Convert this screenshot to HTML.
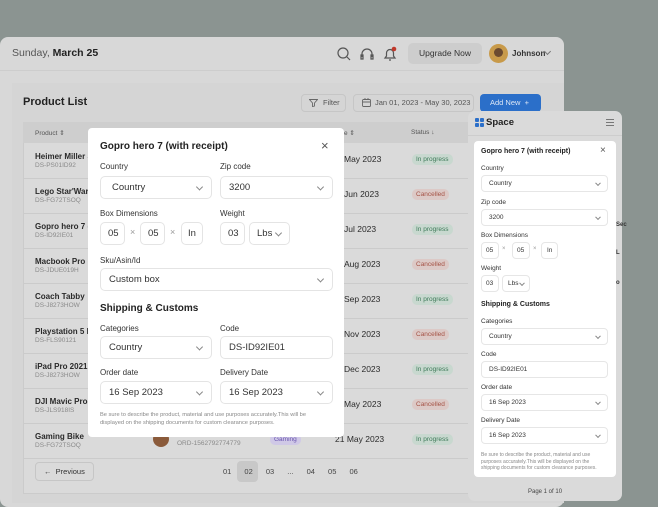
<!DOCTYPE html>
<html><head><meta charset="utf-8"><style>
*{box-sizing:border-box;margin:0;padding:0}
body{width:658px;height:494px;overflow:hidden;background:#8b9491;font-family:"Liberation Sans",sans-serif;position:relative;color:#2a2a2a}
.a{position:absolute;white-space:nowrap}
.win{left:0;top:37px;width:564px;height:470px;background:#d8d8d8;border-radius:8px}
.t{font-size:8px;color:#2a2a2a}
.sm{font-size:6.5px;color:#8a8a8a}
.bx{position:absolute;border:1px solid #e4e4e4;border-radius:5px;background:#fff;font-size:9.5px;color:#333;padding-left:11px;display:flex;align-items:center}
.chev{position:absolute;right:9px;top:50%;width:5px;height:5px;border-right:1px solid #888;border-bottom:1px solid #888;transform:translateY(-70%) rotate(45deg)}
.lb{position:absolute;font-size:8px;color:#333}
.badge{position:absolute;font-size:6.5px;padding:2px 4px;border-radius:5px}
.g{background:#c8d8cf;color:#3d7a58}
.r{background:#dcc9c6;color:#a55245}
.mb{position:absolute;border:1px solid #e6e6e6;border-radius:4px;background:#fff;font-size:6.5px;color:#333;padding-left:7px;display:flex;align-items:center}
.mb .chev{right:7px;width:4px;height:4px}
.ml{position:absolute;font-size:6.5px;color:#333}
</style></head><body>
<div class="a win"></div>
<div class="a" style="left:0;top:70px;width:564px;height:1px;background:#cdcdcd"></div>
<div class="a" style="left:12px;top:47px;font-size:10.5px;color:#555">Sunday, <b style="color:#222">March 25</b></div>
<svg class="a" style="left:336px;top:46px" width="64" height="16" fill="none" stroke="#555" stroke-width="1.2"><circle cx="7" cy="7" r="5"/><path d="M11 11l3 3"/><path d="M26 11v-3a5 5 0 0110 0v3M25 9h2v4h-2zM35 9h2v4h-2z"/><path d="M49 12h10l-1.5-2v-3a3.5 3.5 0 00-7 0v3zM53 14h2"/><circle cx="58" cy="3" r="2.3" fill="#c0392b" stroke="none"/></svg>
<div class="a" style="left:408px;top:43px;width:74px;height:21px;background:#cdcdcd;border-radius:5px;font-size:8.5px;color:#333;text-align:center;line-height:21px">Upgrade Now</div>
<div class="a" style="left:489px;top:44px;width:19px;height:19px;border-radius:50%;background:#c89a4a"><div style="margin:4px 5px;width:9px;height:9px;border-radius:50%;background:#6b4a30"></div></div>
<div class="a" style="left:512px;top:49px;font-size:8px;font-weight:bold;color:#333">Johnson</div>
<div class="a" style="left:545px;top:49px;width:5px;height:5px;border-right:1px solid #777;border-bottom:1px solid #777;transform:rotate(45deg)"></div>
<div class="a" style="left:12px;top:83px;width:552px;height:420px;background:#d5d5d5"></div>
<div class="a" style="left:23px;top:96px;font-size:11px;font-weight:bold;color:#222">Product List</div>
<div class="a" style="left:301px;top:94px;width:45px;height:18px;border:1px solid #c6c6c6;border-radius:4px;font-size:7.5px;color:#555;line-height:16px;padding-left:21px">Filter</div>
<svg class="a" style="left:309px;top:99px" width="9" height="8" fill="none" stroke="#666" stroke-width="0.9"><path d="M0.5 0.5h8l-3 3.5v3l-2 0.5v-3.5z"/></svg>
<div class="a" style="left:353px;top:94px;width:121px;height:18px;border:1px solid #c6c6c6;border-radius:4px;font-size:7.5px;color:#555;line-height:16px;padding-left:21px">Jan 01, 2023 - May 30, 2023</div>
<svg class="a" style="left:362px;top:98px" width="9" height="9" fill="none" stroke="#666" stroke-width="0.9"><rect x="0.5" y="1.5" width="8" height="7" rx="1"/><path d="M0.5 4h8M3 0v2M6 0v2"/></svg>
<div class="a" style="left:480px;top:94px;width:61px;height:18px;background:#2b6fc9;border-radius:4px;font-size:7.5px;color:#dce6f5;line-height:18px;padding-left:10px">Add New &nbsp;+</div>
<div class="a" style="left:23px;top:122px;width:530px;height:372px;background:#dadada;border:1px solid #cbcbcb"></div>
<div class="a" style="left:23px;top:122px;width:530px;height:21px;background:#cecece"></div>
<div class="a sm" style="left:35px;top:129px;color:#555">Product ⇕</div>
<div class="a sm" style="left:344px;top:129px;color:#555">e ⇕</div>
<div class="a sm" style="left:411px;top:129px;color:#555">Status ↓</div>

<div class="a t" style="left:35px;top:152px;font-weight:bold">Heimer Miller So</div><div class="a sm" style="left:35px;top:162px">DS-PS01ID92</div>
<div class="a t" style="left:35px;top:187px;font-weight:bold">Lego Star'War ec</div><div class="a sm" style="left:35px;top:197px">DS-FG72TSOQ</div>
<div class="a t" style="left:35px;top:222px;font-weight:bold">Gopro hero 7 (wi</div><div class="a sm" style="left:35px;top:232px">DS-ID92IE01</div>
<div class="a t" style="left:35px;top:257px;font-weight:bold">Macbook Pro 16</div><div class="a sm" style="left:35px;top:267px">DS-JDUE019H</div>
<div class="a t" style="left:35px;top:292px;font-weight:bold">Coach Tabby</div><div class="a sm" style="left:35px;top:302px">DS-J8273HOW</div>
<div class="a t" style="left:35px;top:327px;font-weight:bold">Playstation 5 Lim</div><div class="a sm" style="left:35px;top:337px">DS-FLS90121</div>
<div class="a t" style="left:35px;top:362px;font-weight:bold">iPad Pro 2021 Mo</div><div class="a sm" style="left:35px;top:372px">DS-J8273HOW</div>
<div class="a t" style="left:35px;top:397px;font-weight:bold">DJI Mavic Pro 2</div><div class="a sm" style="left:35px;top:407px">DS-JLS918IS</div>
<div class="a t" style="left:35px;top:432px;font-weight:bold">Gaming Bike</div><div class="a sm" style="left:35px;top:442px">DS-FG72TSOQ</div>
<div class="a" style="left:153px;top:431px;width:16px;height:16px;border-radius:50%;background:#8a5a3a"></div>
<div class="a sm" style="left:177px;top:440px">ORD-1562792774779</div>
<div class="a badge" style="left:270px;top:434px;background:#cfc8e6;color:#6a55b0">Gaming</div>
<div class="a" style="left:23px;top:178px;width:530px;height:1px;background:#cbcbcb;box-shadow:0 35px #cbcbcb,0 70px #cbcbcb,0 105px #cbcbcb,0 140px #cbcbcb,0 175px #cbcbcb,0 210px #cbcbcb,0 245px #cbcbcb,0 280px #cbcbcb"></div>
<div class="a t" style="left:344px;top:154px;font-size:8.5px">May 2023</div>
<div class="a t" style="left:344px;top:189px;font-size:8.5px">Jun 2023</div>
<div class="a t" style="left:344px;top:224px;font-size:8.5px">Jul 2023</div>
<div class="a t" style="left:344px;top:259px;font-size:8.5px">Aug 2023</div>
<div class="a t" style="left:344px;top:294px;font-size:8.5px">Sep 2023</div>
<div class="a t" style="left:344px;top:329px;font-size:8.5px">Nov 2023</div>
<div class="a t" style="left:344px;top:364px;font-size:8.5px">Dec 2023</div>
<div class="a t" style="left:344px;top:399px;font-size:8.5px">May 2023</div>
<div class="a t" style="left:335px;top:434px;font-size:8.5px">21 May 2023</div>
<div class="a badge g" style="left:412px;top:154px">In progress</div>
<div class="a badge r" style="left:412px;top:189px">Cancelled</div>
<div class="a badge g" style="left:412px;top:224px">In progress</div>
<div class="a badge r" style="left:412px;top:259px">Cancelled</div>
<div class="a badge g" style="left:412px;top:294px">In progress</div>
<div class="a badge r" style="left:412px;top:329px">Cancelled</div>
<div class="a badge g" style="left:412px;top:364px">In progress</div>
<div class="a badge r" style="left:412px;top:399px">Cancelled</div>
<div class="a badge g" style="left:412px;top:434px">In progress</div>
<div class="a" style="left:35px;top:462px;width:59px;height:19px;border:1px solid #c6c6c6;border-radius:4px;font-size:7.5px;color:#333;line-height:17px;padding-left:8px">← &nbsp;Previous</div>
<div class="a" style="left:237px;top:461px;width:21px;height:21px;background:#c8c8c8;border-radius:4px"></div>
<div class="a" style="left:223px;top:467px;font-size:7.5px;color:#444;word-spacing:11px">01 02 03 ... 04 05 06</div>

<!-- modal -->
<div class="a" style="left:88px;top:128px;width:256px;height:309px;background:#fff;border-radius:4px"></div>
<div class="a" style="left:100px;top:141px;font-size:10px;font-weight:bold;color:#222">Gopro hero 7 (with receipt)</div>
<div class="a" style="left:321px;top:138px;font-size:13px;color:#555">×</div>
<div class="lb" style="left:100px;top:162px">Country</div><div class="lb" style="left:220px;top:162px">Zip code</div>
<div class="bx" style="left:100px;top:176px;width:112px;height:23px">Country<i class="chev"></i></div>
<div class="bx" style="left:220px;top:176px;width:113px;height:23px;padding-left:8px">3200<i class="chev"></i></div>
<div class="lb" style="left:100px;top:209px">Box Dimensions</div><div class="lb" style="left:220px;top:209px">Weight</div>
<div class="bx" style="left:100px;top:222px;width:25px;height:23px;padding-left:7px">05</div>
<div class="a" style="left:130px;top:227px;font-size:9px;color:#999">×</div>
<div class="bx" style="left:140px;top:222px;width:25px;height:23px;padding-left:7px">05</div>
<div class="a" style="left:170px;top:227px;font-size:9px;color:#999">×</div>
<div class="bx" style="left:181px;top:222px;width:22px;height:23px;padding-left:6px">In</div>
<div class="bx" style="left:220px;top:222px;width:25px;height:23px;padding-left:7px">03</div>
<div class="bx" style="left:249px;top:222px;width:41px;height:23px;padding-left:7px">Lbs<i class="chev" style="right:8px"></i></div>
<div class="lb" style="left:100px;top:256px">Sku/Asin/Id</div>
<div class="bx" style="left:100px;top:268px;width:233px;height:23px;padding-left:8px">Custom box<i class="chev"></i></div>
<div class="a" style="left:100px;top:303px;font-size:10px;font-weight:bold;color:#222">Shipping &amp; Customs</div>
<div class="lb" style="left:100px;top:324px">Categories</div><div class="lb" style="left:220px;top:324px">Code</div>
<div class="bx" style="left:100px;top:336px;width:112px;height:23px;padding-left:8px">Country<i class="chev"></i></div>
<div class="bx" style="left:220px;top:336px;width:113px;height:23px;padding-left:8px">DS-ID92IE01</div>
<div class="lb" style="left:100px;top:368px">Order date</div><div class="lb" style="left:220px;top:368px">Delivery Date</div>
<div class="bx" style="left:100px;top:381px;width:112px;height:23px;padding-left:8px">16 Sep 2023<i class="chev"></i></div>
<div class="bx" style="left:220px;top:381px;width:113px;height:23px;padding-left:8px">16 Sep 2023<i class="chev"></i></div>
<div class="a" style="left:100px;top:411px;font-size:5.7px;line-height:8px;color:#888">Be sure to describe the product, material and use purposes accurately.This will be<br>displayed on the shipping documents for custom clearance purposes.</div>

<!-- mobile -->
<div class="a" style="left:468px;top:111px;width:154px;height:390px;background:#dadada;border-radius:7px"></div>
<div class="a" style="left:468px;top:135px;width:154px;height:1px;background:#cdcdcd"></div>
<div class="a sm" style="left:616px;top:222px;font-size:6px;color:#333;font-weight:bold">Sec</div>
<div class="a sm" style="left:616px;top:250px;font-size:6px;color:#333;font-weight:bold">L</div>
<div class="a sm" style="left:616px;top:280px;font-size:6px;color:#333;font-weight:bold">o</div>
<svg class="a" style="left:475px;top:118px" width="10" height="10"><rect x="0" y="0" width="4" height="4" rx="1" fill="#2b6fc9"/><rect x="5" y="0" width="4" height="4" rx="1" fill="#2b6fc9"/><rect x="0" y="5" width="4" height="4" rx="1" fill="#2b6fc9"/><rect x="5" y="5" width="4" height="4" rx="1" fill="#2b6fc9"/></svg>
<div class="a" style="left:486px;top:117px;font-size:9.5px;font-weight:bold;color:#222">Space</div>
<div class="a" style="left:606px;top:119px;width:8px;height:1px;background:#777;box-shadow:0 3px #777,0 6px #777"></div>
<div class="a" style="left:474px;top:141px;width:142px;height:336px;background:#fff;border-radius:4px"></div>
<div class="a" style="left:481px;top:148px;font-size:7px;font-weight:bold;color:#222">Gopro hero 7 (with receipt)</div>
<div class="a" style="left:600px;top:145px;font-size:10px;color:#555">×</div>
<div class="ml" style="left:481px;top:165px">Country</div>
<div class="mb" style="left:481px;top:175px;width:127px;height:17px">Country<i class="chev"></i></div>
<div class="ml" style="left:481px;top:199px">Zip code</div>
<div class="mb" style="left:481px;top:209px;width:127px;height:17px">3200<i class="chev"></i></div>
<div class="ml" style="left:481px;top:232px">Box Dimensions</div>
<div class="mb" style="left:481px;top:242px;width:18px;height:17px;padding-left:4px">05</div>
<div class="a" style="left:502px;top:246px;font-size:6px;color:#999">×</div>
<div class="mb" style="left:512px;top:242px;width:18px;height:17px;padding-left:4px">05</div>
<div class="a" style="left:533px;top:246px;font-size:6px;color:#999">×</div>
<div class="mb" style="left:541px;top:242px;width:17px;height:17px;padding-left:5px">In</div>
<div class="ml" style="left:481px;top:265px">Weight</div>
<div class="mb" style="left:481px;top:275px;width:18px;height:17px;padding-left:4px">03</div>
<div class="mb" style="left:502px;top:275px;width:28px;height:17px;padding-left:5px">Lbs<i class="chev" style="right:5px"></i></div>
<div class="a" style="left:481px;top:301px;font-size:7px;font-weight:bold;color:#222">Shipping &amp; Customs</div>
<div class="ml" style="left:481px;top:318px">Categories</div>
<div class="mb" style="left:481px;top:328px;width:127px;height:17px">Country<i class="chev"></i></div>
<div class="ml" style="left:481px;top:351px">Code</div>
<div class="mb" style="left:481px;top:361px;width:127px;height:17px">DS-ID92IE01</div>
<div class="ml" style="left:481px;top:384px">Order date</div>
<div class="mb" style="left:481px;top:394px;width:127px;height:17px">16 Sep 2023<i class="chev"></i></div>
<div class="ml" style="left:481px;top:417px">Delivery Date</div>
<div class="mb" style="left:481px;top:427px;width:127px;height:17px">16 Sep 2023<i class="chev"></i></div>
<div class="a" style="left:481px;top:452px;font-size:5px;line-height:6.7px;color:#888">Be sure to describe the product, material and use<br>purposes accurately.This will be displayed on the<br>shipping documents for custom clearance purposes.</div>
<div class="a" style="left:528px;top:489px;font-size:6px;color:#444">Page 1 of 10</div>
</body></html>
